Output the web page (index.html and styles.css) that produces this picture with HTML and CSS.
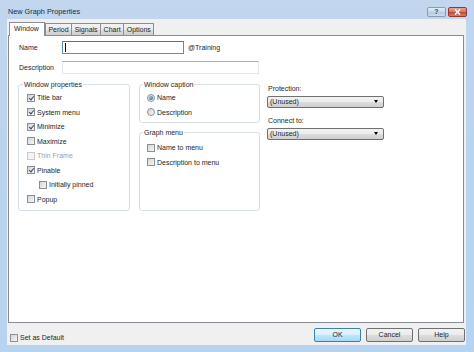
FILE: index.html
```html
<!DOCTYPE html>
<html lang="en">
<head>
    <meta charset="UTF-8">
    <title>New Graph Properties</title>
    <link rel="stylesheet" href="styles.css">
</head>
<body>

    <div class="window">
        <div class="titlebar">
            <span class="title">New Graph Properties</span>
            <div class="caption-buttons">
                <span class="cap help">?</span>
                <span class="cap close">
                    <svg width="7" height="6" viewBox="0 0 7 6"><path d="M1 0.5 L6 5.5 M6 0.5 L1 5.5" stroke="#fff" stroke-width="1.6"/></svg>
                </span>
            </div>
        </div>

        <div class="client">
            <div class="tabs">
                <span class="tab active">Window</span>
                <span class="tab">Period</span>
                <span class="tab">Signals</span>
                <span class="tab">Chart</span>
                <span class="tab">Options</span>
            </div>

            <div class="page">
                <div class="row name-row">
                    <span class="label">Name</span>
                    <div class="textbox name-box focused"><span class="caret"></span></div>
                    <span class="suffix">@Training</span>
                </div>
                <div class="row desc-row">
                    <span class="label">Description</span>
                    <div class="textbox desc-box"></div>
                </div>

                <div class="groups">
                    <fieldset class="group props">
                        <legend>Window properties</legend>
                        <div class="item"><span class="cb checked"></span>Title bar</div>
                        <div class="item"><span class="cb checked"></span>System menu</div>
                        <div class="item"><span class="cb checked"></span>Minimize</div>
                        <div class="item"><span class="cb"></span>Maximize</div>
                        <div class="item disabled"><span class="cb"></span>Thin Frame</div>
                        <div class="item"><span class="cb checked"></span>Pinable</div>
                        <div class="item sub"><span class="cb"></span>Initially pinned</div>
                        <div class="item"><span class="cb"></span>Popup</div>
                    </fieldset>

                    <div class="col-mid">
                        <fieldset class="group caption">
                            <legend>Window caption</legend>
                            <div class="item"><span class="rb selected"></span>Name</div>
                            <div class="item"><span class="rb"></span>Description</div>
                        </fieldset>
                        <fieldset class="group graphmenu">
                            <legend>Graph menu</legend>
                            <div class="item"><span class="cb"></span>Name to menu</div>
                            <div class="item"><span class="cb"></span>Description to menu</div>
                        </fieldset>
                    </div>

                    <div class="col-right">
                        <div class="field-label">Protection:</div>
                        <div class="combo"><span>(Unused)</span><span class="arrow"></span></div>
                        <div class="field-label second">Connect to:</div>
                        <div class="combo"><span>(Unused)</span><span class="arrow"></span></div>
                    </div>
                </div>
            </div>

            <div class="footer">
                <div class="item default-check"><span class="cb"></span>Set as Default</div>
                <div class="buttons">
                    <span class="btn default">OK</span>
                    <span class="btn">Cancel</span>
                    <span class="btn">Help</span>
                </div>
            </div>
        </div>
    </div>

</body>
</html>
```

FILE: styles.css
```css
body {
    margin: 0;
    font-family: 'Liberation Sans', Arial, sans-serif;
    font-size: 7px;
    color: #1e1e1e;
}

.window {
    width: 474px;
    height: 352px;
    background: linear-gradient(to bottom, #c2d6ee, #bcd3ee 40%, #b8d3f0);
    display: flex;
    flex-direction: column;
}

.titlebar {
    height: 19px;
    display: flex;
    align-items: center;
    padding: 0 7px 0 8px;
}

.title {
    flex: 1;
    font-size: 7.3px;
    color: #1b2a3c;
    padding-top: 5px;
}

.caption-buttons {
    display: flex;
    gap: 2px;
    padding-top: 5px;
}

.cap {
    width: 19px;
    height: 10px;
    border: 1px solid #8a9bb2;
    border-radius: 2px;
    box-sizing: border-box;
    display: flex;
    align-items: center;
    justify-content: center;
}

.cap.help {
    background: linear-gradient(to bottom, #e4edf7, #c6d6e9 50%, #b7c9de 51%, #cddcee);
    color: #3a4b62;
    font-size: 7px;
    font-weight: bold;
}

.cap.close {
    border-color: #8c3a33;
    background: linear-gradient(to bottom, #e8a493, #d4735f 50%, #c0452f 51%, #d5806a);
}

.client {
    flex: 1;
    margin: 0 8px 7px 7px;
    background-color: #f0f0f0;
    display: flex;
    flex-direction: column;
}

.tabs {
    display: flex;
    height: 16px;
    align-items: flex-end;
    padding-left: 3px;
    position: relative;
    z-index: 1;
}

.tab {
    height: 11px;
    line-height: 11px;
    padding: 0 2.5px;
    border: 1px solid #8c8e94;
    border-bottom: none;
    margin-right: -1px;
    background: linear-gradient(to bottom, #f2f2f2, #ebebeb 50%, #dddddd 51%, #cfcfcf);
}

.tab:first-child {
    margin-right: 0;
}

.tab.active {
    height: 13px;
    line-height: 12px;
    padding: 0 5px 0 4px;
    background: #fff;
    margin-bottom: -1px;
    margin-left: -1px;
}

.page {
    height: 288px;
    margin: 0 2px 0 1px;
    background: #fff;
    border: 1px solid #898c95;
    box-sizing: border-box;
}

.row {
    display: flex;
    align-items: center;
}

.label {
    width: 43px;
    padding-left: 10px;
}

.name-row {
    margin-top: 5px;
}

.desc-row {
    margin-top: 7px;
}

.textbox {
    height: 13px;
    box-sizing: border-box;
    border: 1px solid #abadb3;
    border-left-color: #e2e3ea;
    border-right-color: #e2e3ea;
    border-bottom-color: #e3e9ef;
    background: #fff;
    display: flex;
    align-items: center;
}

.textbox.focused {
    border-color: #5a8fb9;
    border-top-color: #3d7bad;
}

.caret {
    width: 1px;
    height: 9px;
    background: #000;
    margin-left: 2px;
}

.name-box {
    width: 122px;
}

.desc-box {
    width: 197px;
}

.suffix {
    margin-left: 4px;
}

.groups {
    display: flex;
    margin-top: 6px;
    padding-left: 9px;
}

.group {
    margin: 0;
    border: 1px solid #d5dfe5;
    border-radius: 3px;
    box-sizing: border-box;
}

.group legend {
    padding: 0 1px;
    margin-left: -4px;
    line-height: 9px;
}

.item {
    display: flex;
    align-items: center;
    height: 14.5px;
    gap: 1px;
}

.item.disabled {
    color: #a0a0a0;
}

.item.sub {
    padding-left: 12px;
}

.props {
    width: 112px;
    height: 131px;
    padding: 2px 0 0 8px;
}

.col-mid {
    display: flex;
    flex-direction: column;
    margin-left: 9px;
    width: 121px;
}

.caption {
    height: 43px;
    padding: 2px 0 0 7px;
}

.caption legend,
.graphmenu legend {
    margin-left: -4px;
}

.graphmenu {
    height: 83px;
    margin-top: 5px;
    padding: 4px 0 0 7px;
}

.col-right {
    margin-left: 7px;
    padding-top: 4px;
    width: 117px;
}

.field-label {
    line-height: 9px;
    padding-left: 1px;
}

.field-label.second {
    margin-top: 8px;
}

.combo {
    margin-top: 3px;
    height: 12px;
    box-sizing: border-box;
    border: 1px solid #707070;
    border-radius: 2px;
    background: linear-gradient(to bottom, #f2f2f2, #ebebeb 50%, #dddddd 51%, #cfcfcf);
    display: flex;
    align-items: center;
    justify-content: space-between;
    padding: 0 5px 0 2px;
}

.arrow {
    width: 0;
    height: 0;
    border-left: 2.5px solid transparent;
    border-right: 2.5px solid transparent;
    border-top: 3px solid #000;
}

.cb {
    width: 8px;
    height: 8px;
    box-sizing: border-box;
    border: 1px solid #8e8f8f;
    background: linear-gradient(135deg, #d3d6db, #f6f6f6);
    flex-shrink: 0;
    position: relative;
    margin-right: 1px;
}

.item.disabled .cb {
    border-color: #c9c9c9;
    background: #f4f4f4;
}

.cb.checked::after {
    content: '';
    position: absolute;
    left: 2px;
    top: 0;
    width: 2px;
    height: 4px;
    border-right: 1.3px solid #2c4a74;
    border-bottom: 1.3px solid #2c4a74;
    transform: rotate(40deg);
}

.rb {
    width: 8px;
    height: 8px;
    box-sizing: border-box;
    border: 1px solid #8e8f8f;
    border-radius: 50%;
    background: linear-gradient(135deg, #d3d6db, #f6f6f6);
    flex-shrink: 0;
    position: relative;
    margin-right: 1px;
}

.rb.selected::after {
    content: '';
    position: absolute;
    left: 1px;
    top: 1px;
    width: 4px;
    height: 4px;
    border-radius: 50%;
    background: radial-gradient(circle at 35% 35%, #8fc3ea, #1f5a8f);
}

.footer {
    flex: 1;
    display: flex;
    align-items: center;
    justify-content: space-between;
    padding: 2px 1px 0 3px;
}

.default-check {
    padding-top: 6px;
}

.buttons {
    display: flex;
    gap: 5px;
}

.btn {
    width: 47px;
    height: 14px;
    box-sizing: border-box;
    border: 1px solid #707070;
    border-radius: 2px;
    background: linear-gradient(to bottom, #f2f2f2, #ebebeb 50%, #dddddd 51%, #cfcfcf);
    display: flex;
    align-items: center;
    justify-content: center;
}

.btn.default {
    border-color: #3c7fb1;
    background: linear-gradient(to bottom, #eaf6fd, #d9f0fc 50%, #bee6fd 51%, #a7d9f5);
}
```
